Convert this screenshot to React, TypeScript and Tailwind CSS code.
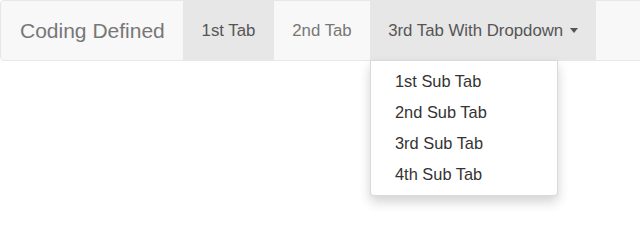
export default function App() {
  const subTabs = ["1st Sub Tab", "2nd Sub Tab", "3rd Sub Tab", "4th Sub Tab"];

  return (
    <div className="w-full h-[221px] overflow-hidden bg-white font-['Liberation_Sans',Arial,sans-serif]">
      <nav className="w-[680px] h-[61px] flex border border-[#e7e7e7] bg-[#f8f8f8] rounded-[4px]">
        <a className="w-[182px] h-[59px] flex items-center pl-[19px] text-[21px] text-[#777]">
          Coding Defined
        </a>
        <ul className="flex h-[59px] text-[16.8px]">
          <li className="w-[91px] flex items-center justify-center bg-[#e7e7e7] text-[#555]">1st Tab</li>
          <li className="w-[96px] flex items-center justify-center text-[#777]">2nd Tab</li>
          <li className="relative w-[226px] flex items-center justify-center bg-[#e7e7e7] text-[#555]">
            <span className="whitespace-pre">3rd Tab With Dropdown </span>
            <span className="ml-[2px] w-0 h-0 border-x-[4.5px] border-x-transparent border-t-[5px] border-t-[#555]" />
            <ul className="absolute left-0 top-full w-[188px] py-[5px] bg-white border border-black/15 rounded-b-[4px] shadow-[0_6px_12px_rgba(0,0,0,0.175)] z-10 text-[16.4px]">
              {subTabs.map((tab) => (
                <li key={tab} className="h-[31px] flex items-center px-[24px] text-[#333]">
                  {tab}
                </li>
              ))}
            </ul>
          </li>
        </ul>
      </nav>
    </div>
  );
}
